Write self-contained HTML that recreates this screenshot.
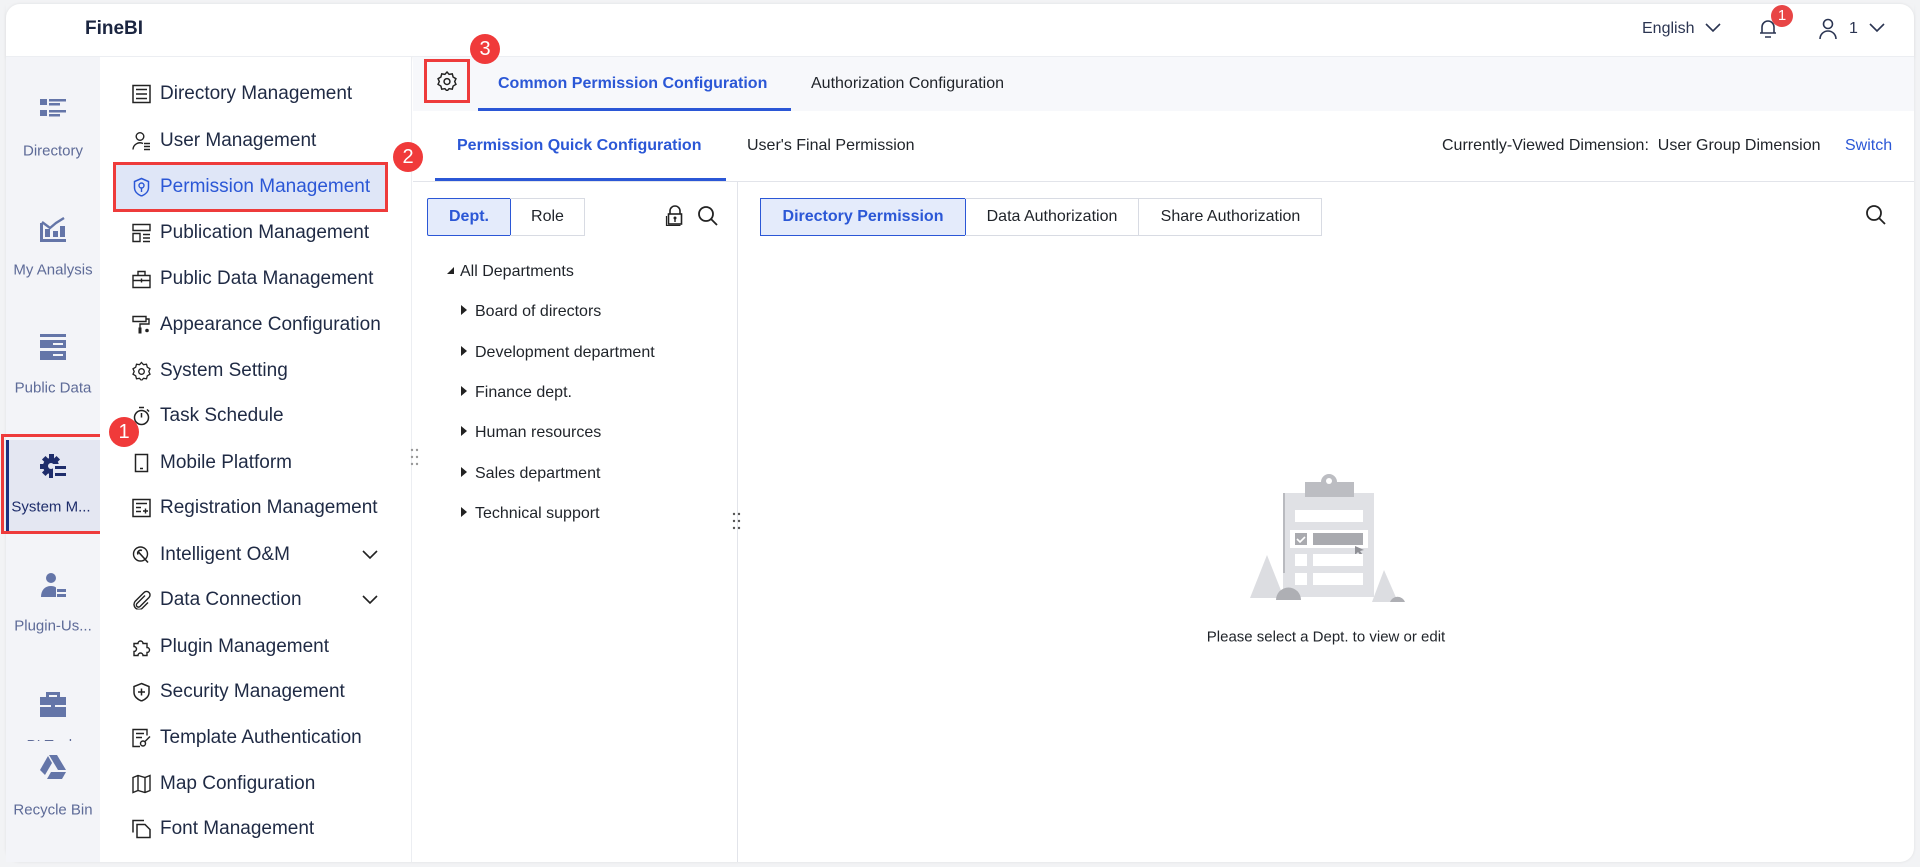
<!DOCTYPE html>
<html><head><meta charset="utf-8"><style>
*{margin:0;padding:0;box-sizing:border-box}
body{width:1920px;height:867px;background:#f2f3f5;font-family:"Liberation Sans",Arial,sans-serif;position:relative;overflow:hidden;color:#1f2329}
.a{position:absolute}
.card{left:6px;top:4px;width:1908px;height:858px;background:#fff;border-radius:14px;overflow:hidden;box-shadow:0 0 3px rgba(0,0,0,.08)}
.t{position:absolute;white-space:nowrap;transform:translateY(-50%)}
.rail{left:6px;top:57px;width:94px;height:805px;background:#f3f4f8}
.rl{position:absolute;width:94px;left:6px;text-align:center;font-size:15px;color:#5e6b98;transform:translateY(-50%)}
.mi{position:absolute;left:160px;font-size:19px;color:#1f2a44;transform:translateY(-50%);white-space:nowrap}
.ic{position:absolute;left:132px;width:19px;height:19px;transform:translateY(-50%)}
.badge{position:absolute;width:30px;height:30px;border-radius:50%;background:#f03a3a;color:#fff;font-size:20px;text-align:center;line-height:30px;transform:translate(-50%,-50%);z-index:5}
.tree{position:absolute;font-size:16px;color:#1f2329;transform:translateY(-50%);white-space:nowrap}
.tri{display:inline-block;width:0;height:0;border-top:5px solid transparent;border-bottom:5px solid transparent;border-left:6px solid #222;margin-right:8px;vertical-align:1px}
</style></head><body>
<div class="a card"></div>
<div class="a" style="left:6px;top:4px;width:1908px;height:53px;border-bottom:1px solid #eceef2;box-shadow:0 2px 4px rgba(0,0,0,.04)"></div>
<div class="t" style="left:85px;top:29px;font-size:19px;font-weight:bold;color:#1b2540">FineBI</div>
<div class="t" style="left:1642px;top:29px;font-size:16px;color:#2b3552">English</div>
<svg class="a" style="left:1704px;top:22px" width="18" height="12"><path d="M2 2l7 7 7-7" fill="none" stroke="#2b3552" stroke-width="1.6"/></svg>
<svg class="a" style="left:1758px;top:17px" width="20" height="22"><path d="M4 16V10a6 6 0 0 1 12 0v6M2 16h16M7 20h6" fill="none" stroke="#2b3552" stroke-width="1.6"/></svg>
<div class="badge" style="left:1782px;top:16px;width:22px;height:22px;line-height:22px;font-size:15px;background:#e84545">1</div>
<svg class="a" style="left:1818px;top:18px" width="20" height="22"><circle cx="10" cy="6" r="4.5" fill="none" stroke="#2b3552" stroke-width="1.6"/><path d="M2 21a8 8 0 0 1 16 0" fill="none" stroke="#2b3552" stroke-width="1.6"/></svg>
<div class="t" style="left:1849px;top:29px;font-size:16px;color:#2b3552">1</div>
<svg class="a" style="left:1868px;top:22px" width="18" height="12"><path d="M2 2l7 7 7-7" fill="none" stroke="#2b3552" stroke-width="1.6"/></svg>

<!-- rail -->
<div class="a rail"></div>
<svg class="a" style="left:40px;top:98px" width="26" height="24"><g fill="#6475a8"><rect x="0" y="1" width="7" height="6"/><rect x="9" y="1" width="17" height="2.5"/><rect x="9" y="5" width="11" height="2.5"/><rect x="0" y="12" width="7" height="6"/><rect x="9" y="12" width="17" height="2.5"/><rect x="9" y="16" width="11" height="2.5"/></g></svg>
<div class="rl" style="top:151px">Directory</div>
<svg class="a" style="left:40px;top:217px" width="26" height="26"><g fill="#6475a8"><rect x="0" y="22" width="26" height="3"/><rect x="0" y="6" width="3" height="18"/><rect x="5" y="12" width="5" height="8"/><rect x="13" y="14" width="5" height="6"/><rect x="20" y="9" width="5" height="11"/><path d="M2 5l8 6 6-5 8-5" fill="none" stroke="#6475a8" stroke-width="2.4"/></g></svg>
<div class="rl" style="top:270px">My Analysis</div>
<svg class="a" style="left:40px;top:334px" width="26" height="26"><g fill="#6475a8"><rect x="0" y="0" width="26" height="3"/><rect x="0" y="6" width="26" height="8"/><rect x="0" y="17" width="26" height="9"/></g><rect x="13" y="9" width="10" height="2" fill="#f3f4f8"/><rect x="13" y="20" width="10" height="2" fill="#f3f4f8"/></svg>
<div class="rl" style="top:388px">Public Data</div>
<div class="a" style="left:6px;top:440px;width:94px;height:92px;background:#e4e7f2"></div>
<div class="a" style="left:6px;top:440px;width:3px;height:92px;background:#1d2f80"></div>
<svg class="a" style="left:40px;top:453px" width="26" height="26"><g fill="#1e2d6b"><circle cx="11" cy="13" r="8"/><rect x="9" y="1" width="5" height="24"/><rect x="-1" y="11" width="24" height="5"/><rect x="3" y="4" width="5" height="5" transform="rotate(45 5.5 6.5)"/><rect x="14" y="4" width="5" height="5" transform="rotate(45 16.5 6.5)"/><rect x="3" y="17" width="5" height="5" transform="rotate(45 5.5 19.5)"/></g><rect x="13" y="11" width="14" height="15" fill="#e4e7f2"/><g fill="#1e2d6b"><rect x="15" y="13" width="11" height="3"/><rect x="15" y="20" width="11" height="3"/></g><circle cx="11" cy="13" r="3" fill="#e4e7f2"/></svg>
<div class="rl" style="top:507px;color:#1e2d6b;left:4px">System M...</div>
<div class="a" style="left:1px;top:434px;width:106px;height:100px;border:3px solid #ee3b3b"></div>
<svg class="a" style="left:40px;top:572px" width="26" height="26"><g fill="#6475a8"><circle cx="11" cy="6" r="5"/><path d="M1 25c0-7 4-11 10-11 2 0 4 .5 5 1.5V25z"/><rect x="17" y="17" width="9" height="3"/><rect x="17" y="22" width="9" height="3"/></g></svg>
<div class="rl" style="top:626px">Plugin-Us...</div>
<svg class="a" style="left:40px;top:692px" width="26" height="26"><g fill="#6475a8"><rect x="8" y="0" width="10" height="3"/><rect x="6" y="0" width="3" height="6"/><rect x="17" y="0" width="3" height="6"/><rect x="0" y="5" width="26" height="8"/><rect x="0" y="15" width="26" height="10"/><rect x="11" y="10" width="4" height="9"/></g></svg>
<div class="a" style="left:6px;top:737px;width:94px;height:4px;overflow:hidden;text-align:center;font-size:15px;color:#5e6b98;line-height:18px"><div style="margin-top:0">BI Tools</div></div>
<svg class="a" style="left:40px;top:755px" width="26" height="24"><g fill="#6475a8"><path d="M9 0h8l9 15h-8z"/><path d="M8 1l4 7-7 12-5-5z"/><path d="M7 24l4-7h15l-4 7z"/></g></svg>
<div class="rl" style="top:810px">Recycle Bin</div>

<!-- menu -->
<div class="a" style="left:100px;top:57px;width:312px;height:805px;background:#fff;border-right:1px solid #eceef2"></div>
<div class="badge" style="left:124px;top:432px">1</div>
<div class="a" style="left:113px;top:162px;width:275px;height:50px;background:#dfe6f7;border:3px solid #ee3b3b"></div>
<div class="badge" style="left:408px;top:157px">2</div>
<svg class="ic" style="top:94px" viewBox="0 0 19 19"><rect x="1" y="1" width="17" height="17" fill="none" stroke="#222" stroke-width="1.5"/><path d="M4 5h11M4 9.5h11M4 14h11" stroke="#222" stroke-width="1.4"/></svg>
<div class="mi" style="top:94px">Directory Management</div>
<svg class="ic" style="top:141px" viewBox="0 0 19 19"><circle cx="8" cy="5" r="3.8" fill="none" stroke="#222" stroke-width="1.4"/><path d="M1 18a7 7 0 0 1 10-6M12 12h6M12 15h6M12 18h6" fill="none" stroke="#222" stroke-width="1.4"/></svg>
<div class="mi" style="top:141px">User Management</div>
<svg class="ic" style="top:187px" viewBox="0 0 19 19"><path d="M9.5 1l7 3v6c0 4-3 7-7 8.5C5.5 17 2.5 14 2.5 10V4z" fill="none" stroke="#2b57d6" stroke-width="1.5"/><circle cx="9.5" cy="8" r="2.5" fill="none" stroke="#2b57d6" stroke-width="1.4"/><path d="M9.5 10.5v4" stroke="#2b57d6" stroke-width="1.4"/></svg>
<div class="mi" style="top:187px;color:#2b57d6">Permission Management</div>
<svg class="ic" style="top:233px" viewBox="0 0 19 19"><path d="M1 1h17v6H1zM1 10h7v8H1zM11 11h7M11 14.5h7M11 18h7" fill="none" stroke="#222" stroke-width="1.4"/></svg>
<div class="mi" style="top:233px">Publication Management</div>
<svg class="ic" style="top:279px" viewBox="0 0 19 19"><path d="M1 6h17v12H1zM1 11h17M6 6V2h7v4M9.5 9v4" fill="none" stroke="#222" stroke-width="1.4"/></svg>
<div class="mi" style="top:279px">Public Data Management</div>
<svg class="ic" style="top:325px" viewBox="0 0 19 19"><path d="M1 1h13v5H1zM14 3.5h3v5H8v4" fill="none" stroke="#222" stroke-width="1.4"/><rect x="6.5" y="12" width="3" height="6" fill="#222"/><circle cx="15" cy="15" r="1.8" fill="#222"/></svg>
<div class="mi" style="top:325px">Appearance Configuration</div>
<svg class="ic" style="top:371px" viewBox="0 0 19 19"><path d="M9.5 1l2 2.2 3-.5.8 3 2.7 1.6-1.2 2.7 1.2 2.7-2.7 1.6-.8 3-3-.5-2 2.2-2-2.2-3 .5-.8-3L1 12.7l1.2-2.7L1 7.3l2.7-1.6.8-3 3 .5z" fill="none" stroke="#222" stroke-width="1.3"/><circle cx="9.5" cy="10" r="2.8" fill="none" stroke="#222" stroke-width="1.3"/></svg>
<div class="mi" style="top:371px">System Setting</div>
<svg class="ic" style="top:416px" viewBox="0 0 19 19"><circle cx="9.5" cy="11" r="7" fill="none" stroke="#222" stroke-width="1.5"/><path d="M7 1h5M9.5 11V6.5M15 3l2 2" stroke="#222" stroke-width="1.5"/></svg>
<div class="mi" style="top:416px">Task Schedule</div>
<svg class="ic" style="top:463px" viewBox="0 0 19 19"><rect x="3.5" y="1" width="12" height="17" fill="none" stroke="#222" stroke-width="1.5"/><path d="M8 15h3" stroke="#222" stroke-width="1.5"/></svg>
<div class="mi" style="top:463px">Mobile Platform</div>
<svg class="ic" style="top:508px" viewBox="0 0 19 19"><rect x="1" y="1" width="17" height="17" fill="none" stroke="#222" stroke-width="1.5"/><path d="M4 5h11M4 9h5M4 13h5M11 12.5h5M13.5 10v5" stroke="#222" stroke-width="1.4"/></svg>
<div class="mi" style="top:508px">Registration Management</div>
<svg class="ic" style="top:555px" viewBox="0 0 19 19"><circle cx="8.5" cy="8.5" r="7" fill="none" stroke="#222" stroke-width="1.4"/><path d="M6 6l10 11M10 5a3 3 0 0 0-4 4" fill="none" stroke="#222" stroke-width="1.6"/></svg>
<div class="mi" style="top:555px">Intelligent O&amp;M</div>
<svg class="a" style="left:362px;top:549px" width="16" height="11"><path d="M1 2l7 7 7-7" fill="none" stroke="#222" stroke-width="1.6"/></svg>
<svg class="ic" style="top:600px" viewBox="0 0 19 19"><path d="M13 5l-8 8a2 2 0 0 0 3 3l9-9a3.5 3.5 0 0 0-5-5L3 11a5 5 0 0 0 7 7l6-6" fill="none" stroke="#222" stroke-width="1.4"/></svg>
<div class="mi" style="top:600px">Data Connection</div>
<svg class="a" style="left:362px;top:594px" width="16" height="11"><path d="M1 2l7 7 7-7" fill="none" stroke="#222" stroke-width="1.6"/></svg>
<svg class="ic" style="top:647px" viewBox="0 0 19 19"><path d="M2 6h4a2.5 2.5 0 1 1 5 0h4v4a2.5 2.5 0 1 1 0 5v3H11a2.5 2.5 0 1 0-5 0H2v-4a2.5 2.5 0 1 0 0-5z" fill="none" stroke="#222" stroke-width="1.4"/></svg>
<div class="mi" style="top:647px">Plugin Management</div>
<svg class="ic" style="top:692px" viewBox="0 0 19 19"><path d="M9.5 1l7.5 3v6c0 4-3.5 7-7.5 8.5C5.5 17 2 14 2 10V4z" fill="none" stroke="#222" stroke-width="1.5"/><path d="M6 9.5h7M9.5 6v7" stroke="#222" stroke-width="1.5"/></svg>
<div class="mi" style="top:692px">Security Management</div>
<svg class="ic" style="top:738px" viewBox="0 0 19 19"><path d="M15 7V1H1v17h7M4 5h8M4 9h6" fill="none" stroke="#222" stroke-width="1.4"/><circle cx="11" cy="15" r="2.5" fill="none" stroke="#222" stroke-width="1.4"/><path d="M13 13l5-5" stroke="#222" stroke-width="1.4"/></svg>
<div class="mi" style="top:738px">Template Authentication</div>
<svg class="ic" style="top:784px" viewBox="0 0 19 19"><path d="M1 3l5-2 7 2 5-2v15l-5 2-7-2-5 2zM6 1v15M13 3v15" fill="none" stroke="#222" stroke-width="1.4"/></svg>
<div class="mi" style="top:784px">Map Configuration</div>
<svg class="ic" style="top:829px" viewBox="0 0 19 19"><path d="M1 13V1h11M5 5h8l5 5v8H5z" fill="none" stroke="#222" stroke-width="1.5"/></svg>
<div class="mi" style="top:829px">Font Management</div>

<!-- main -->
<div class="a" style="left:413px;top:57px;width:1501px;height:54px;background:#f7f8fb"></div>
<div class="a" style="left:424px;top:59px;width:46px;height:44px;border:3px solid #ee3b3b"></div>
<svg class="a" style="left:437px;top:71px" width="20" height="20" viewBox="0 0 19 19"><path d="M9.5 1l2 2.2 3-.5.8 3 2.7 1.6-1.2 2.7 1.2 2.7-2.7 1.6-.8 3-3-.5-2 2.2-2-2.2-3 .5-.8-3L1 12.7l1.2-2.7L1 7.3l2.7-1.6.8-3 3 .5z" fill="none" stroke="#222" stroke-width="1.4"/><circle cx="9.5" cy="10" r="2.8" fill="none" stroke="#222" stroke-width="1.4"/></svg>
<div class="badge" style="left:485px;top:49px">3</div>
<div class="t" style="left:498px;top:84px;font-size:16px;font-weight:bold;color:#2b57d6">Common Permission Configuration</div>
<div class="a" style="left:478px;top:108px;width:313px;height:3px;background:#2b57d6"></div>
<div class="t" style="left:811px;top:84px;font-size:16px;color:#1f2329">Authorization Configuration</div>

<div class="a" style="left:413px;top:181px;width:1501px;height:1px;background:#e2e4ea"></div>
<div class="t" style="left:457px;top:146px;font-size:16px;font-weight:bold;color:#2b57d6">Permission Quick Configuration</div>
<div class="a" style="left:435px;top:178px;width:291px;height:3px;background:#2b57d6"></div>
<div class="t" style="left:747px;top:146px;font-size:16px">User's Final Permission</div>
<div class="t" style="left:1442px;top:146px;font-size:16px">Currently-Viewed Dimension:&nbsp; User Group Dimension</div>
<div class="t" style="left:1845px;top:146px;font-size:16px;color:#2b57d6">Switch</div>

<div class="a" style="left:737px;top:182px;width:1px;height:680px;background:#e2e4ea"></div>
<div class="a" style="left:427px;top:198px;width:84px;height:38px;background:#e4ebfb;border:1px solid #2b57d6;border-radius:2px 0 0 2px"></div>
<div class="t" style="left:427px;width:84px;text-align:center;top:217px;font-size:16px;font-weight:bold;color:#2b57d6">Dept.</div>
<div class="a" style="left:510px;top:198px;width:75px;height:38px;border:1px solid #d8dbe3;border-left:none"></div>
<div class="t" style="left:510px;width:75px;text-align:center;top:217px;font-size:16px">Role</div>
<svg class="a" style="left:665px;top:204px" width="20" height="22"><path d="M5 10V7a5 5 0 0 1 10 0v3" fill="none" stroke="#222" stroke-width="1.6"/><rect x="3.5" y="10" width="13" height="10" fill="none" stroke="#222" stroke-width="1.6"/><circle cx="10" cy="14" r="1.5" fill="#222"/><path d="M10 14v4" stroke="#222" stroke-width="1.4"/><path d="M1.5 12v9.5h14" fill="none" stroke="#222" stroke-width="1.2"/></svg>
<svg class="a" style="left:697px;top:205px" width="22" height="22"><circle cx="9" cy="9" r="7" fill="none" stroke="#222" stroke-width="1.8"/><path d="M14 14l6 6" stroke="#222" stroke-width="1.8"/></svg>
<div class="tree" style="left:447px;top:272px"><span style="display:inline-block;width:0;height:0;border-left:7px solid transparent;border-bottom:7px solid #222;margin-right:6px;vertical-align:2px"></span>All Departments</div>
<div class="tree" style="left:461px;top:312px"><span class="tri"></span>Board of directors</div>
<div class="tree" style="left:461px;top:353px"><span class="tri"></span>Development department</div>
<div class="tree" style="left:461px;top:393px"><span class="tri"></span>Finance dept.</div>
<div class="tree" style="left:461px;top:433px"><span class="tri"></span>Human resources</div>
<div class="tree" style="left:461px;top:474px"><span class="tri"></span>Sales department</div>
<div class="tree" style="left:461px;top:514px"><span class="tri"></span>Technical support</div>
<svg class="a" style="left:410px;top:448px" width="10" height="20"><g fill="#999"><circle cx="2" cy="2" r="1.2"/><circle cx="7" cy="2" r="1.2"/><circle cx="2" cy="9" r="1.2"/><circle cx="7" cy="9" r="1.2"/><circle cx="2" cy="16" r="1.2"/><circle cx="7" cy="16" r="1.2"/></g></svg>
<svg class="a" style="left:732px;top:512px" width="10" height="20"><g fill="#555"><circle cx="2" cy="2" r="1.2"/><circle cx="7" cy="2" r="1.2"/><circle cx="2" cy="9" r="1.2"/><circle cx="7" cy="9" r="1.2"/><circle cx="2" cy="16" r="1.2"/><circle cx="7" cy="16" r="1.2"/></g></svg>

<div class="a" style="left:760px;top:198px;width:206px;height:38px;background:#e4ebfb;border:1px solid #2b57d6"></div>
<div class="t" style="left:760px;width:206px;text-align:center;top:217px;font-size:16px;font-weight:bold;color:#2b57d6">Directory Permission</div>
<div class="a" style="left:965px;top:198px;width:357px;height:38px;border:1px solid #d8dbe3;border-left:none"></div>
<div class="a" style="left:1138px;top:198px;width:1px;height:38px;background:#d8dbe3"></div>
<div class="t" style="left:966px;width:172px;text-align:center;top:217px;font-size:16px">Data Authorization</div>
<div class="t" style="left:1139px;width:183px;text-align:center;top:217px;font-size:16px">Share Authorization</div>
<svg class="a" style="left:1865px;top:204px" width="22" height="22"><circle cx="9" cy="9" r="7" fill="none" stroke="#222" stroke-width="1.8"/><path d="M14 14l6 6" stroke="#222" stroke-width="1.8"/></svg>

<svg class="a" style="left:1240px;top:470px" width="180" height="140">
<path d="M10 128L27 85l17 43z" fill="#dcdde1"/>
<path d="M132 132l12-32 14 32z" fill="#dcdde1"/>
<rect x="43" y="23" width="91" height="104" fill="#e0e1e5"/>
<rect x="43" y="23" width="2" height="80" fill="#b9babf"/>
<rect x="65" y="12" width="49" height="15" fill="#bcbdc2"/>
<circle cx="89" cy="12" r="8" fill="#bcbdc2"/><circle cx="89" cy="11" r="3" fill="#fff"/>
<rect x="55" y="40" width="68" height="12" fill="#fff"/>
<rect x="50" y="60" width="78" height="18" fill="#fff"/>
<rect x="55" y="63" width="12" height="12" fill="#a9aaaf"/><path d="M57 69l3 3 5-5" stroke="#fff" stroke-width="1.6" fill="none"/>
<rect x="73" y="63" width="50" height="12" fill="#a9aaaf"/>
<path d="M115 76l9 4-4 1 3 4-2 1-3-4-3 3z" fill="#8f9096"/>
<rect x="55" y="84" width="12" height="12" fill="#fff"/><rect x="73" y="84" width="50" height="12" fill="#fff"/>
<rect x="55" y="103" width="12" height="12" fill="#fff"/><rect x="73" y="103" width="50" height="12" fill="#fff"/>
<path d="M36 130a12 12 0 0 1 25 0z" fill="#aeafb4"/>
<path d="M150 132a8 8 0 0 1 15 0z" fill="#aeafb4"/>
</svg>
<div class="t" style="left:1126px;width:400px;text-align:center;top:637px;font-size:15px;color:#1f2329">Please select a Dept. to view or edit</div>
</body></html>
